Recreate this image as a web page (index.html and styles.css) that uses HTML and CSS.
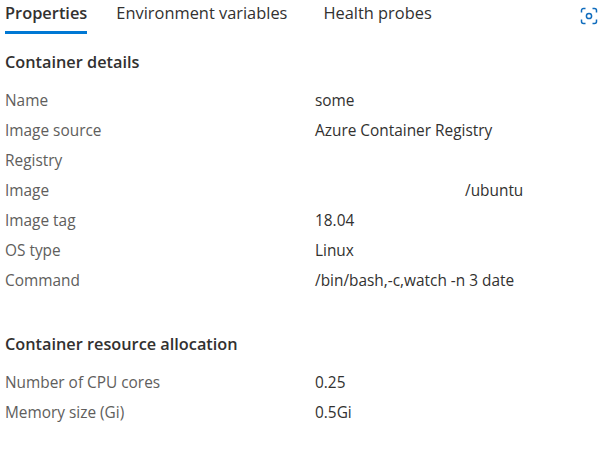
FILE: index.html
```html
<!DOCTYPE html>
<html lang="en">
<head>
<meta charset="utf-8">
<title>Container properties</title>
<link rel="stylesheet" href="styles.css">
</head>
<body>
<div class="tabbar">
  <div class="tab active">Properties</div>
  <div class="tab env">Environment variables</div>
  <div class="tab">Health probes</div>
  <svg class="focus" width="18" height="18" viewBox="0 0 18 18" fill="none" stroke="#0f6cbd" stroke-width="1.5" aria-hidden="true">
    <path d="M1.500 5.500V3.500a2 2 0 0 1 2-2H5.500M12.500 1.500h2a2 2 0 0 1 2 2V5.500M16.500 12.500v2a2 2 0 0 1-2 2H12.500M5.500 16.500H3.500a2 2 0 0 1-2-2V12.500"/>
    <circle cx="9" cy="9" r="2.600"/>
  </svg>
</div>
<h2 class="heading first">Container details</h2>
<dl class="props">
  <dt>Name</dt><dd>some</dd>
  <dt>Image source</dt><dd>Azure Container Registry</dd>
  <dt>Registry</dt><dd></dd>
  <dt>Image</dt><dd class="image">/ubuntu</dd>
  <dt>Image tag</dt><dd>18.04</dd>
  <dt>OS type</dt><dd>Linux</dd>
  <dt>Command</dt><dd>/bin/bash,-c,watch -n 3 date</dd>
</dl>
<h2 class="heading second">Container resource allocation</h2>
<dl class="props lower">
  <dt>Number of CPU cores</dt><dd>0.25</dd>
  <dt>Memory size (Gi)</dt><dd>0.5Gi</dd>
</dl>
</body>
</html>
```
FILE: styles.css
```css
html, body {
  margin: 0;
  padding: 0;
  background: #fff;
  overflow: hidden;
}
body {
  width: 599px;
  height: 455px;
  font-family: "Open Sans", "Noto Sans", sans-serif;
  color: #323130;
}
.tabbar {
  display: flex;
  align-items: flex-start;
  height: 34px;
  padding-left: 5px;
  position: relative;
}
.tab {
  font-size: 16.4px;
  line-height: 26px;
  margin-right: 36px;
  height: 31px;
}
.tab.active {
  font-weight: 600;
  border-bottom: 3px solid #0078d4;
  margin-right: 29px;
}
.focus {
  position: absolute;
  left: 580px;
  top: 7px;
}
.heading {
  font-size: 16.3px;
  font-weight: 600;
  line-height: 22px;
  margin: 0;
  padding-left: 5px;
}
.first { margin-top: 17px; }
.second { margin-top: 37px; }
.props {
  display: grid;
  grid-template-columns: 310px 1fr;
  grid-auto-rows: 30px;
  margin: 13px 0 0;
  padding-left: 5px;
  font-size: 15.4px;
  line-height: 30px;
}
.props dt { color: #605e5c; }
.props dd { margin: 0; }
.props dd.image { padding-left: 150px; }
```
